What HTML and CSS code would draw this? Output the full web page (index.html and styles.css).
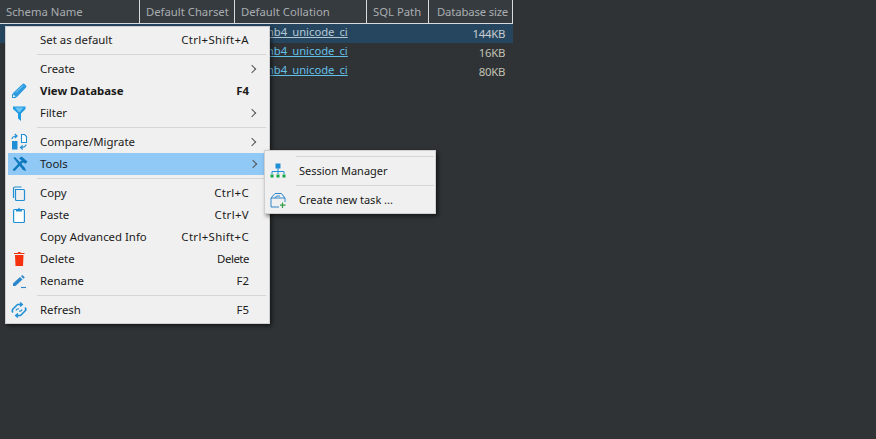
FILE: index.html
```html
<!DOCTYPE html>
<html lang="en">
<head>
<meta charset="utf-8">
<title>Schemas</title>
<link rel="stylesheet" href="styles.css">
</head>
<body>
<div class="grid">
  <div class="cell head">Schema Name</div>
  <div class="cell head">Default Charset</div>
  <div class="cell head">Default Collation</div>
  <div class="cell head">SQL Path</div>
  <div class="cell head last">Database size</div>

  <div class="row selected">
    <div class="cell"></div><div class="cell"></div>
    <div class="cell link">utf8mb4_unicode_ci</div><div class="cell"></div>
    <div class="cell size">144KB</div>
  </div>
  <div class="row">
    <div class="cell"></div><div class="cell"></div>
    <div class="cell link">utf8mb4_unicode_ci</div><div class="cell"></div>
    <div class="cell size">16KB</div>
  </div>
  <div class="row">
    <div class="cell"></div><div class="cell"></div>
    <div class="cell link">utf8mb4_unicode_ci</div><div class="cell"></div>
    <div class="cell size">80KB</div>
  </div>
</div>

<div class="menu main-menu">
  <div class="item"><span class="ico"></span><span class="label">Set as default</span><span class="key chord">Ctrl+Shift+A</span></div>
  <div class="sep"></div>
  <div class="item sub"><span class="ico"></span><span class="label">Create</span></div>
  <div class="item bold"><span class="ico">
    <svg viewBox="0 0 18 18" width="18" height="18"><path d="M2 16v-4L12.500 2a1.500 1.500 0 0 1 2.100 0l1.400 1.400a1.500 1.500 0 0 1 0 2.100L6 16z" fill="#2c9be0"/><path d="M2.500 11.500L6.500 15.500" stroke="#fff" stroke-width="1"/><path d="M2.500 12.800h2.700v2.700H2.500z" fill="#fff" stroke="#1f8fd6" stroke-width="1"/><path d="M6 10.500L13 3.500" stroke="#8fd0f5" stroke-width="1"/></svg>
  </span><span class="label">View Database</span><span class="key">F4</span></div>
  <div class="item sub"><span class="ico">
    <svg viewBox="0 0 18 18" width="18" height="18"><path d="M3 2.500h12.500V5L11 9.500V17L8 14.500V9.500L3 5z" fill="#1f9be4"/><path d="M5 3.500h8.500L10 8H8.500z" fill="#6cc4f4"/></svg>
  </span><span class="label">Filter</span></div>
  <div class="sep"></div>
  <div class="item sub"><span class="ico">
    <svg viewBox="0 0 18 18" width="18" height="18"><path d="M11.500 1.500h3l2 2v6h-5z" fill="#fff" stroke="#1f8fd6" stroke-width="1.100"/><path d="M2 8h5.500v8.500H2z" fill="#1f8fd6"/><path d="M2 6c.3-2 1.800-3 4.500-3M4.800 1l2.200 2-2.200 2" fill="none" stroke="#1f8fd6" stroke-width="1.200"/><path d="M16 11.500c-.3 2-1.800 3-5 3M12.700 12.500L10.500 14.500l2.200 2" fill="none" stroke="#1f8fd6" stroke-width="1.200"/></svg>
  </span><span class="label">Compare/Migrate</span></div>
  <div class="item sub active"><span class="ico">
    <svg viewBox="0 0 18 18" width="18" height="18"><path d="M3.500 3l1.500-1 10 11 1 3-3-1z" fill="#0d78bd"/><path d="M3.500 15.500L12.500 6" stroke="#0d78bd" stroke-width="2.400"/><path d="M9 3.500l2.500-2 6 5-1.800 2.200-2.700-1.200-1-2z" fill="#0d78bd"/></svg>
  </span><span class="label">Tools</span></div>
  <div class="sep"></div>
  <div class="item"><span class="ico">
    <svg viewBox="0 0 18 18" width="18" height="18" fill="none" stroke="#1f8fd6" stroke-width="1.200"><path d="M5.500 5.500h8a1 1 0 0 1 1 1v9a1 1 0 0 1-1 1h-7a1 1 0 0 1-1-1z"/><path d="M11.500 3H5a1.500 1.500 0 0 0-1.500 1.500V14"/></svg>
  </span><span class="label">Copy</span><span class="key chord">Ctrl+C</span></div>
  <div class="item"><span class="ico">
    <svg viewBox="0 0 18 18" width="18" height="18"><rect x="3.600" y="3.500" width="10.800" height="13" rx="1" fill="#fff" stroke="#1f8fd6" stroke-width="1.200"/><path d="M6 5.500V3h2l1-1.500L10 3h2v2.500z" fill="#1f8fd6"/></svg>
  </span><span class="label">Paste</span><span class="key chord">Ctrl+V</span></div>
  <div class="item"><span class="ico"></span><span class="label">Copy Advanced Info</span><span class="key chord">Ctrl+Shift+C</span></div>
  <div class="item"><span class="ico">
    <svg viewBox="0 0 18 18" width="18" height="18"><path d="M5 5h8.500L13 16H5.500z" fill="#f5310e"/><path d="M4 3h4V2h2.500v1h4v1H4z" fill="#f5310e"/></svg>
  </span><span class="label">Delete</span><span class="key word">Delete</span></div>
  <div class="item"><span class="ico">
    <svg viewBox="0 0 18 18" width="18" height="18"><path d="M3 14v-2.500l7-6.500 2.500 2.500L5.500 14z" fill="#2c86cc"/><path d="M11 4.200l1.300-1.200 2.500 2.500-1.300 1.300z" fill="#2c86cc"/><path d="M11 15.500h5" stroke="#2c86cc" stroke-width="1.100"/></svg>
  </span><span class="label">Rename</span><span class="key">F2</span></div>
  <div class="sep"></div>
  <div class="item"><span class="ico">
    <svg viewBox="0 0 18 18" width="18" height="18" fill="none" stroke="#1f8fd6" stroke-width="1.600"><path d="M3 11.500c-1-1-1-2.500 0-3.500l4.500-4.500h4"/><path d="M15 6.500c1 1 1 2.500 0 3.500l-4.500 4.500h-4"/><path d="M10 1.500l2.200 2-2.200 2M8 12.500l-2.200 2 2.200 2"/><path d="M6 9.500c.5-1.500 2-2 3-1.500M12 8.500c-.5 1.500-2 2-3 1.500" stroke-width="1.200"/></svg>
  </span><span class="label">Refresh</span><span class="key">F5</span></div>
</div>

<div class="menu sub-menu">
  <div class="sep"></div>
  <div class="item"><span class="ico">
    <svg viewBox="0 0 18 18" width="18" height="18"><rect x="6.500" y="1.500" width="5" height="5" fill="#1f8fd6"/><path d="M9 6v3M3 12V9.500h12V12M9 9v3" fill="none" stroke="#1f8fd6" stroke-width="1"/><path d="M1.500 12.500H4.500V15.500H1.500zM7.500 12.500H10.500V15.500H7.500zM13.500 12.500H16.500V15.500H13.500z" fill="#12a84a"/></svg>
  </span><span class="label">Session Manager</span></div>
  <div class="sep"></div>
  <div class="item"><span class="ico">
    <svg viewBox="0 0 18 18" width="18" height="18"><path d="M2 7L6 2.500h6.500L16 7v4M2 7v9h8M2 7h14M6 7l1.500-2H11" fill="none" stroke="#2c86cc" stroke-width="1"/><path d="M13.500 11.500v5.500M11 14.200h5.500" stroke="#2f9e44" stroke-width="1.200"/></svg>
  </span><span class="label">Create new task ...</span></div>
</div>
</body>
</html>
```

FILE: styles.css
```css
html, body {
  margin: 0;
  height: 100%;
  background: #2f3336;
  overflow: hidden;
}
body {
  font-family: "Noto Sans", "Open Sans", sans-serif;
  font-size: 11.4px;
  color: #1a1a1a;
}
.grid {
  display: grid;
  grid-template-columns: 140px 95px 132px 62px 84px;
  width: 513px;
}
.row {
  display: contents;
}
.cell {
  height: 19px;
  line-height: 19px;
  padding: 0 7px;
  box-sizing: border-box;
  color: #b9bdc0;
  white-space: nowrap;
  overflow: hidden;
}
.head {
  height: 24px;
  line-height: 24px;
  padding: 0 4px 0 6px;
  background: #363b3f;
  border-right: 1px solid #d8dadb;
  border-bottom: 1px solid #d8dadb;
  color: #a9adb0;
  font-size: 11.3px;
}
.head.last {
  padding-left: 8px;
  letter-spacing: -.15px;
}
.selected .cell {
  background: #264660;
  color: #c8cccf;
}
.link {
  padding-left: 7px;
  line-height: 16px;
  font-size: 11.25px;
  color: #62bfe8;
  text-decoration: underline;
}
.selected .link {
  color: #b3c6d4;
}
.size {
  text-align: right;
  padding-right: 8px;
  letter-spacing: -.3px;
  color: #c2c2b4;
}
.menu {
  position: absolute;
  box-sizing: border-box;
  background: #f0f0f0;
  border: 1px solid #cfcfcf;
  box-shadow: 2px 2px 4px rgba(0, 0, 0, .55);
}
.main-menu {
  left: 5px;
  top: 26px;
  width: 265px;
  padding: 2px;
}
.sub-menu {
  left: 264px;
  top: 150px;
  width: 172px;
  height: 64px;
  padding: 2px 1px 1px 3px;
  font-size: 11px;
}
.item {
  display: flex;
  align-items: center;
  height: 22px;
  position: relative;
  color: #1a1a1a;
}
.ico {
  flex: 0 0 34px;
  display: flex;
  justify-content: center;
  margin-left: -2px;
  padding-right: 8px;
  box-sizing: border-box;
}
.label {
  flex: 1;
  margin-bottom: 2px;
  white-space: nowrap;
}
.key {
  margin-right: 18px;
  margin-bottom: 2px;
  white-space: nowrap;
}
.chord {
  letter-spacing: .35px;
}
.word {
  letter-spacing: -.45px;
}
.bold {
  font-weight: 700;
}
.sub::after {
  content: "";
  position: absolute;
  right: 12px;
  top: 8px;
  width: 5px;
  height: 5px;
  border-top: 1px solid #555;
  border-right: 1px solid #555;
  transform: rotate(45deg);
}
.active {
  background: #90c8f6;
  margin-right: -1px;
}
.sep {
  height: 1px;
  margin: 3px 1px 3px 29px;
  background: #d6d6d6;
}
.sub-menu .item .ico {
  flex-basis: 31px;
  margin-left: 0;
  padding-right: 12px;
  padding-left: 0;
}
.sub-menu .sep {
  margin-left: 28px;
  margin-right: 0;
}
```
